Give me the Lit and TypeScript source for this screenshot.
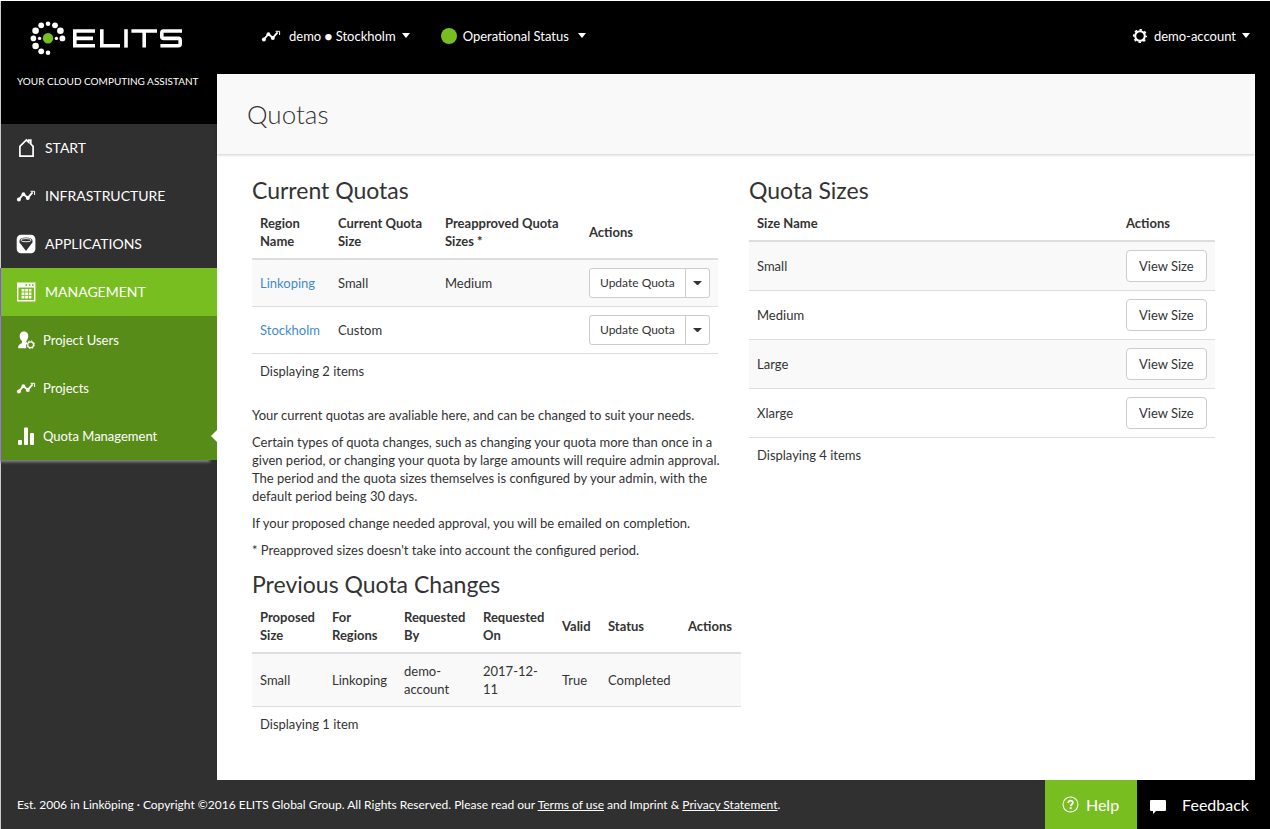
import { LitElement, html, svg, css } from "lit";
import { customElement, property } from "lit/decorators.js";

const trend = svg`<path d="M2.6 13.6 7.4 8.2 11.8 11.8 16.6 6.4" fill="none" stroke="currentColor" stroke-width="1.9"/>
  <path d="M14.6 5.3H18.6V9" fill="none" stroke="currentColor" stroke-width="1"/>
  <circle cx="2.9" cy="13.4" r="2"/><circle cx="7.4" cy="8.2" r="1.9"/><circle cx="11.8" cy="12" r="2"/>`;

const glyphs: Record<string, unknown> = {
  trend,
  home: svg`<path d="M3.9 18.2V8.4L10.4 2 12.8 4.2V2H14.8V6L17.1 8.4V18.2Z" fill="none" stroke="currentColor" stroke-width="1.7"/>`,
  apps: svg`<path fill-rule="evenodd" d="M5.2 .7H14.8A4.4 4.4 0 0 1 19.4 5.2V14.8A4.4 4.4 0 0 1 14.8 19.3H5.2A4.4 4.4 0 0 1 .7 14.8V5.2A4.4 4.4 0 0 1 5.2 .7ZM3.6 6.2 3.4 8.2 10 17 16.6 8.2 16.4 6.2C15.6 2.7 4.4 2.7 3.6 6.2Z"/>
    <ellipse cx="10" cy="6.2" rx="5.2" ry="1.6" fill="none" stroke="currentColor" stroke-width=".9"/>`,
  calendar: svg`<path fill-rule="evenodd" d="M1 .6H19.4V19.4H1ZM2.4 5.4V18H18V5.4ZM9.5 2.3V4H11V2.3ZM12.8 2.3V4H14.3V2.3ZM16 2.3V4H17.5V2.3Z"/>
    <path d="M5.6 7H8.4V9.6H5.6ZM9.2 7H12V9.6H9.2ZM12.8 7H15.4V9.6H12.8ZM5.6 10.4H8.4V13H5.6ZM9.2 10.4H12V13H9.2ZM12.8 10.4H15.4V13H12.8ZM5.6 13.8H8.4V16.4H5.6ZM9.2 13.8H12V16.4H9.2ZM12.8 13.8H15.4V16.4H12.8Z"/>`,
  user: svg`<path d="M7.9 1.6C11 1.6 12.4 3.8 12.2 6.4 12 8.6 11 9.8 10.4 10.9V12.2L11.6 12.8A4.6 4.6 0 0 0 10.4 18.2H2.2C2 15.2 3.2 14.2 6 13V10.9C4.8 9.9 3.9 8.4 3.7 6.4 3.5 3.8 5 1.6 7.9 1.6Z"/>
    <circle cx="14.6" cy="14.7" r="2.9" fill="none" stroke="currentColor" stroke-width="1.2"/>
    <circle cx="14.6" cy="14.7" r="3.9" fill="none" stroke="currentColor" stroke-width="1" stroke-dasharray="1.53 1.53"/>`,
  bars: svg`<rect x="2" y="14" width="4" height="5" rx="1"/><rect x="8" y="1.4" width="4" height="17.6" rx="1"/><rect x="14" y="7" width="4" height="12" rx="1"/>`,
  gear: svg`<circle cx="10" cy="10" r="6" fill="none" stroke="currentColor" stroke-width="2.6"/>
    <circle cx="10" cy="10" r="7.8" fill="none" stroke="currentColor" stroke-width="2.2" stroke-dasharray="3.06 3.06" stroke-dashoffset="1.53"/>`,
  help: svg`<circle cx="10" cy="10" r="8.8" fill="none" stroke="currentColor" stroke-width="1.2"/>
    <path d="M7.4 8.2C7.3 4.4 12.9 4.6 12.8 7.8 12.7 9.6 10.4 9.8 10.2 12" fill="none" stroke="currentColor" stroke-width="2.1"/><rect x="9.1" y="13.2" width="2.2" height="2.2"/>`,
  chat: svg`<path d="M4 5H18Q19 5 19 6V15Q19 16 18 16H9L6 19V16H4Q3 16 3 15V6Q3 5 4 5Z"/>`,
};

@customElement("ui-icon")
class UiIcon extends LitElement {
  @property() name = "";
  @property({ type: Number }) size = 20;
  static styles = css`
    :host { display: inline-flex; flex: none; }
    svg { display: block; fill: currentColor; }
  `;
  render() {
    return html`<svg width=${this.size} height=${this.size} viewBox="0 0 20 20" aria-hidden="true">${glyphs[this.name]}</svg>`;
  }
}

@customElement("brand-logo")
class BrandLogo extends LitElement {
  static styles = css`
    :host { display: block; }
    svg { display: block; }
  `;
  render() {
    return html`<svg width="156" height="36" viewBox="0 0 156 36" role="img" aria-label="ELITS">
      <g fill="#fff">
        <circle cx="18" cy="2.8" r="2.3"/><circle cx="11.2" cy="4.3" r="2.9"/><circle cx="25" cy="4.3" r="2.9"/>
        <circle cx="5.6" cy="9.8" r="3.3"/><circle cx="30.4" cy="9.8" r="3.3"/>
        <circle cx="3.4" cy="17.4" r="2.8"/><circle cx="32.4" cy="17.4" r="2.9"/>
        <circle cx="9.6" cy="17.4" r="1.7"/><circle cx="26.4" cy="17.4" r="1.7"/>
        <circle cx="5.6" cy="25" r="3.3"/><circle cx="11.2" cy="30.3" r="2.9"/><circle cx="18" cy="31.8" r="2.3"/>
      </g>
      <circle cx="18" cy="17.2" r="5.2" fill="#78be20"/>
      <g fill="none" stroke="#fff" stroke-width="3.6">
        <path d="M65 10H44.8V24.8H65M44.8 17.4H63"/>
        <path d="M71.8 8.2V24.8H90"/>
        <path d="M96 8.2V26.6"/>
        <path d="M101.4 10H127M114.2 10V26.6"/>
        <path d="M152 10H133.4Q131.8 10 131.8 12V15.4Q131.8 17.4 133.8 17.4H148.4Q150.2 17.4 150.2 19.4V22.8Q150.2 24.8 148.4 24.8H130.4"/>
      </g>
    </svg>`;
  }
}

@customElement("app-root")
class AppRoot extends LitElement {
  static styles = css`
    :host { display: block; font: 13px/18px Lato, sans-serif; color: #333; }
    * { box-sizing: border-box; }
    button { font: inherit; color: inherit; cursor: pointer; }
    .page { display: flex; flex-direction: column; min-height: 100vh; border-top: 1px solid #fff; background: #000; }
    .body { display: flex; flex: 1; }
    .side { flex: none; width: 217px; background: #303030; border-left: 1px solid #ccc; color: #fff; }
    .brand { height: 123px; padding: 20px 16px 0 29px; background: #000; }
    .tag { margin: 15px 0 0 -13px; font-size: 10px; white-space: nowrap; }
    .nav a { display: flex; align-items: center; gap: 9px; height: 48px; padding-left: 15px; color: #fff; font-size: 14px; text-decoration: none; text-transform: uppercase; }
    .nav .active { background: #78be20; box-shadow: -1px 0 #8a4fe8; }
    .sub { background: #588c19; box-shadow: -1px 0 #a070f0, -7px 2px 3px #888; }
    .nav .sub a { position: relative; gap: 7px; font-size: 13px; text-transform: none; }
    .nav .sub .current::after { content: ""; position: absolute; right: 0; top: 18px; border: 6px solid transparent; border-left-width: 0; border-right-color: #fff; }
    .right { display: flex; flex: 1; flex-direction: column; min-width: 0; }
    .top { display: flex; align-items: center; height: 73px; padding: 0 20px 4px 44px; color: #fff; }
    .menu { display: flex; align-items: center; padding: 0; border: 0; background: none; white-space: nowrap; }
    .status { margin-left: 31px; }
    .account { margin-left: auto; }
    .menu ui-icon { margin-right: 8px; }
    .account ui-icon { margin-right: 6px; }
    .dot { width: 16px; height: 16px; margin-right: 6px; border-radius: 50%; background: #78be20; }
    .caret { display: inline-block; margin-left: 5px; border: 4px solid transparent; border-top-color: currentColor; border-bottom: 0; }
    .menu .caret { margin-left: 6px; border-top-width: 5px; }
    .status .caret { margin-left: 9px; }
    .panel { flex: 1; margin-right: 15px; background: #fff; }
    .title { padding: 22px 30px; background: #f9f9f9; box-shadow: 0 1px 3px rgba(0, 0, 0, 0.2); }
    h1 { margin: 0; font-size: 26px; line-height: 36px; font-weight: 300; }
    .cols { display: grid; grid-template-columns: minmax(0, 1fr) minmax(0, 1fr); gap: 31px; padding: 20px 40px 20px 35px; }
    h2 { margin: 0; font-size: 23px; line-height: 32px; font-weight: 400; }
    p { margin: 0 -8px 9px 0; }
    table { width: 100%; margin-bottom: 18px; border-spacing: 0; }
    th, td { padding: 8px; text-align: left; vertical-align: middle; }
    th { border-bottom: 2px solid #ddd; font-weight: 700; }
    tbody td { border-bottom: 1px solid #ddd; }
    tbody tr:nth-child(odd) { background: #f9f9f9; }
    td a { color: #428bca; text-decoration: none; }
    .region { width: 78px; }
    .size { width: 107px; }
    .pre { width: 144px; }
    .view { width: 97px; }
    .history { width: 105%; }
    .w72 { width: 72px; }
    .w79 { width: 79px; }
    .w46 { width: 46px; }
    .w80 { width: 80px; }
    .btn { display: block; height: 32px; padding: 0 12px; border: 1px solid #ccc; border-radius: 4px; background: #fff; white-space: nowrap; }
    .group { display: flex; }
    .group .btn { height: 30px; padding: 0 10px; border-radius: 3px 0 0 3px; font-size: 12px; }
    .group .more { width: 25px; margin-left: -1px; padding: 0 7px; border-radius: 0 3px 3px 0; }
    .more .caret { display: block; margin: 0; }
    .foot { display: flex; flex: none; height: 49px; color: #fff; }
    .legal { flex: 1; padding: 16px 16px 0; border-left: 1px solid #ccc; background: #303030; font-size: 12px; line-height: 18px; }
    .legal a { color: inherit; text-decoration: underline; }
    .foot button { display: flex; align-items: center; border: 0; color: #fff; font-size: 16px; }
    .help { gap: 7px; padding: 0 18px 0 17px; background: #78be20; }
    .feedback { gap: 15px; padding: 0 21px 0 10px; background: #000; }
  `;

  private changes = [
    ["Proposed Size", "w72"], ["For Regions", "w72"], ["Requested By", "w79"], ["Requested On", "w79"],
    ["Valid", "w46"], ["Status", "w80"], ["Actions", ""],
  ];

  private quota(region: string, size: string, pre: string) {
    return html`<tr>
      <td><a href="#">${region}</a></td><td>${size}</td><td>${pre}</td>
      <td><div class="group"><button class="btn">Update Quota</button><button class="btn more" aria-label="More actions"><i class="caret"></i></button></div></td>
    </tr>`;
  }

  private link(icon: string, label: string, cls = "") {
    return html`<a href="#" class=${cls}><ui-icon name=${icon}></ui-icon><span>${label}</span></a>`;
  }

  render() {
    return html`<div class="page">
      <div class="body">
        <aside class="side">
          <div class="brand"><brand-logo></brand-logo><div class="tag">YOUR CLOUD COMPUTING ASSISTANT</div></div>
          <nav class="nav">
            ${this.link("home", "Start")}
            ${this.link("trend", "Infrastructure")}
            ${this.link("apps", "Applications")}
            ${this.link("calendar", "Management", "active")}
            <div class="sub">
              ${this.link("user", "Project Users")}
              ${this.link("trend", "Projects")}
              ${this.link("bars", "Quota Management", "current")}
            </div>
          </nav>
        </aside>
        <div class="right">
          <header class="top">
            <button class="menu"><ui-icon name="trend"></ui-icon>demo ● Stockholm<i class="caret"></i></button>
            <button class="menu status"><i class="dot"></i>Operational Status<i class="caret"></i></button>
            <button class="menu account"><ui-icon name="gear" size="16"></ui-icon>demo-account<i class="caret"></i></button>
          </header>
          <main class="panel">
            <div class="title"><h1>Quotas</h1></div>
            <div class="cols">
              <section>
                <h2>Current Quotas</h2>
                <table>
                  <thead><tr><th class="region">Region Name</th><th class="size">Current Quota Size</th><th class="pre">Preapproved Quota Sizes *</th><th>Actions</th></tr></thead>
                  <tbody>${this.quota("Linkoping", "Small", "Medium")}${this.quota("Stockholm", "Custom", "")}</tbody>
                  <tfoot><tr><td colspan="4">Displaying 2 items</td></tr></tfoot>
                </table>
                <p>Your current quotas are avaliable here, and can be changed to suit your needs.</p>
                <p>Certain types of quota changes, such as changing your quota more than once in a given period, or changing your quota by large amounts will require admin approval. The period and the quota sizes themselves is configured by your admin, with the default period being 30 days.</p>
                <p>If your proposed change needed approval, you will be emailed on completion.</p>
                <p>* Preapproved sizes doesn't take into account the configured period.</p>
                <h2>Previous Quota Changes</h2>
                <table class="history">
                  <thead><tr>${this.changes.map(([label, width]) => html`<th class=${width}>${label}</th>`)}</tr></thead>
                  <tbody><tr><td>Small</td><td>Linkoping</td><td>demo-account</td><td>2017-12-11</td><td>True</td><td>Completed</td><td></td></tr></tbody>
                  <tfoot><tr><td colspan="7">Displaying 1 item</td></tr></tfoot>
                </table>
              </section>
              <section>
                <h2>Quota Sizes</h2>
                <table>
                  <thead><tr><th>Size Name</th><th class="view">Actions</th></tr></thead>
                  <tbody>${["Small", "Medium", "Large", "Xlarge"].map((s) => html`<tr><td>${s}</td><td><button class="btn">View Size</button></td></tr>`)}</tbody>
                  <tfoot><tr><td colspan="2">Displaying 4 items</td></tr></tfoot>
                </table>
              </section>
            </div>
          </main>
        </div>
      </div>
      <footer class="foot">
        <div class="legal">Est. 2006 in Linköping · Copyright ©2016 ELITS Global Group. All Rights Reserved. Please read our <a href="#">Terms of use</a> and Imprint &amp; <a href="#">Privacy Statement</a>.</div>
        <button class="help"><ui-icon name="help" size="17"></ui-icon>Help</button>
        <button class="feedback"><ui-icon name="chat"></ui-icon>Feedback</button>
      </footer>
    </div>`;
  }
}
